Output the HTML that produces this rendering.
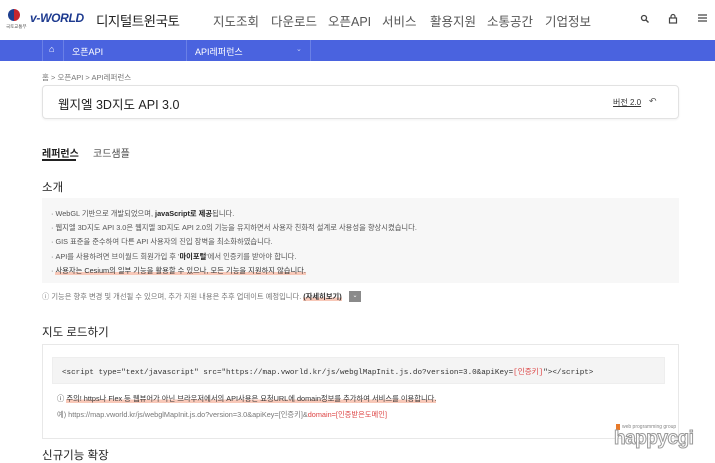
<!DOCTYPE html>
<html><head><meta charset="utf-8"><style>
*{margin:0;padding:0;box-sizing:border-box}
body{width:715px;height:457px;overflow:hidden;background:#fff;font-family:"Liberation Sans","Noto Sans CJK KR",sans-serif;color:#222;position:relative}
.a{position:absolute;white-space:nowrap}
.n{font-size:12.5px;color:#555;top:11px}
</style></head><body>
<!-- header -->
<div class="a" style="left:8px;top:9px;width:12px;height:12px;border-radius:50%;background:conic-gradient(#c6262e 0 50%,#1f3f8f 50% 100%)"></div>
<div class="a" style="left:6px;top:24px;font-size:4.5px;color:#555">국토교통부</div>
<div class="a" style="left:30px;top:11px;font-size:12px;font-weight:bold;font-style:italic;color:#1d3a8f;letter-spacing:-0.3px">v-WORLD</div>
<div class="a" style="left:96px;top:10px;font-size:13.5px;color:#222;letter-spacing:-0.5px">디지털트윈국토</div>
<div class="a n" style="left:213px">지도조회</div>
<div class="a n" style="left:271px">다운로드</div>
<div class="a n" style="left:328px">오픈API</div>
<div class="a n" style="left:382px">서비스</div>
<div class="a n" style="left:430px">활용지원</div>
<div class="a n" style="left:487px">소통공간</div>
<div class="a n" style="left:545px">기업정보</div>
<svg class="a" style="left:640px;top:14px" width="10" height="10"><circle cx="4" cy="4" r="2.5" fill="none" stroke="#444" stroke-width="1.3"/><line x1="6" y1="6" x2="8.5" y2="8.5" stroke="#444" stroke-width="1.4"/></svg>
<svg class="a" style="left:668px;top:13px" width="10" height="11"><path d="M3 5V3.5a2 2 0 0 1 4 0V5" fill="none" stroke="#444" stroke-width="1.2"/><rect x="1.5" y="5" width="7" height="5" fill="none" stroke="#444" stroke-width="1.2"/></svg>
<svg class="a" style="left:698px;top:14px" width="9" height="8"><path d="M0 1h9M0 4h9M0 7h9" stroke="#444" stroke-width="1.3"/></svg>
<!-- blue bar -->
<div class="a" style="left:0;top:40px;width:715px;height:21px;background:#4a63df"></div>
<div class="a" style="left:42px;top:40px;width:1px;height:21px;background:#6a80e6"></div>
<div class="a" style="left:63px;top:40px;width:1px;height:21px;background:#6a80e6"></div>
<div class="a" style="left:186px;top:40px;width:1px;height:21px;background:#6a80e6"></div>
<div class="a" style="left:310px;top:40px;width:1px;height:21px;background:#6a80e6"></div>
<div class="a" style="left:49px;top:44px;font-size:9px;color:#fff">⌂</div>
<div class="a" style="left:72px;top:45px;font-size:9px;color:#fff">오픈API</div>
<div class="a" style="left:195px;top:45px;font-size:9px;color:#fff">API레퍼런스</div>
<div class="a" style="left:296px;top:45px;font-size:7px;color:#c8d0f5">⌄</div>
<!-- breadcrumb -->
<div class="a" style="left:42px;top:72px;font-size:7.5px;color:#777">홈 &gt; 오픈API &gt; API레퍼런스</div>
<div class="a" style="left:42px;top:85px;width:637px;height:34px;border:1px solid #e2e2e2;border-radius:4px;box-shadow:0 1px 2px rgba(0,0,0,.06)"></div>
<div class="a" style="left:58px;top:94px;font-size:12.5px;color:#222">웹지엘 3D지도 API 3.0</div>
<div class="a" style="left:613px;top:97px;font-size:8px;color:#333;text-decoration:underline">버전 2.0</div>
<div class="a" style="left:649px;top:96px;font-size:9px;color:#555">↶</div>
<!-- tabs -->
<div class="a" style="left:42px;top:145px;font-size:10px;color:#222;font-weight:bold">레퍼런스</div>
<div class="a" style="left:42px;top:159px;width:34px;height:2px;background:#222"></div>
<div class="a" style="left:93px;top:145px;font-size:10px;color:#444">코드샘플</div>
<div class="a" style="left:42px;top:179px;font-size:11.5px;color:#222">소개</div>
<div class="a" style="left:42px;top:198px;width:637px;height:85px;background:#f7f7f7"></div>
<div class="a" style="left:51px;top:207px;font-size:7.3px;color:#555;line-height:14.2px">
· WebGL 기반으로 개발되었으며, <b style="color:#222">javaScript로 제공</b>됩니다.<br>
· 웹지엘 3D지도 API 3.0은 웹지엘 3D지도 API 2.0의 기능을 유지하면서 사용자 친화적 설계로 사용성을 향상시켰습니다.<br>
· GIS 표준을 준수하여 다른 API 사용자의 진입 장벽을 최소화하였습니다.<br>
· API를 사용하려면 브이월드 회원가입 후 '<b style="color:#222">마이포털</b>'에서 인증키를 받아야 합니다.<br>
· <span style="color:#333;background:linear-gradient(transparent 65%,#f8c8b8 65%)">사용자는 Cesium의 일부 기능을 활용할 수 있으나, 모든 기능을 지원하지 않습니다.</span></div>
<div class="a" style="left:42px;top:292px;font-size:7.3px;color:#777">ⓘ 기능은 향후 변경 및 개선될 수 있으며, 추가 지원 내용은 추후 업데이트 예정입니다. <b style="color:#333;background:linear-gradient(transparent 60%,#f8c8b8 60%)">(자세히보기)</b></div>
<div class="a" style="left:349px;top:291px;width:12px;height:11px;background:#8a8a8a;color:#fff;font-size:6px;text-align:center;line-height:11px">⌄</div>
<div class="a" style="left:42px;top:324px;font-size:11.5px;color:#222">지도 로드하기</div>
<div class="a" style="left:42px;top:344px;width:637px;height:95px;border:1px solid #e8e8e8"></div>
<div class="a" style="left:52px;top:357px;width:613px;height:27px;background:#f4f4f4;border:1px solid #eee"></div>
<div class="a" style="left:62px;top:366px;font-family:'Liberation Mono',monospace;font-size:7.6px;color:#333">&lt;script type="text/javascript" src="https://map.vworld.kr/js/webglMapInit.js.do?version=3.0&amp;apiKey=<span style="color:#d44">[인증키]</span>"&gt;&lt;/script&gt;</div>
<div class="a" style="left:57px;top:394px;font-size:7.3px;color:#333">ⓘ <span style="background:linear-gradient(transparent 60%,#f8c8b8 60%)">주의! https나 Flex 등 웹뷰어가 아닌 브라우저에서의 API사용은 요청URL에 domain정보를 추가하여 서비스를 이용합니다.</span></div>
<div class="a" style="left:57px;top:410px;font-size:7.3px;color:#777">예) https://map.vworld.kr/js/webglMapInit.js.do?version=3.0&amp;apiKey=[인증키]&amp;<span style="color:#d44">domain=[인증받은도메인]</span></div>
<div class="a" style="left:42px;top:447px;font-size:11.5px;color:#222">신규기능 확장</div>
<!-- watermark -->
<div class="a" style="left:616px;top:424px;width:4px;height:6px;background:#e87a2a"></div>
<div class="a" style="left:622px;top:424px;font-size:5px;color:#888">web programming group</div>
<div class="a" style="left:614px;top:428px;font-size:19px;font-weight:bold;color:#fff;-webkit-text-stroke:1px #999;letter-spacing:-0.5px">happycgi</div>
</body></html>
